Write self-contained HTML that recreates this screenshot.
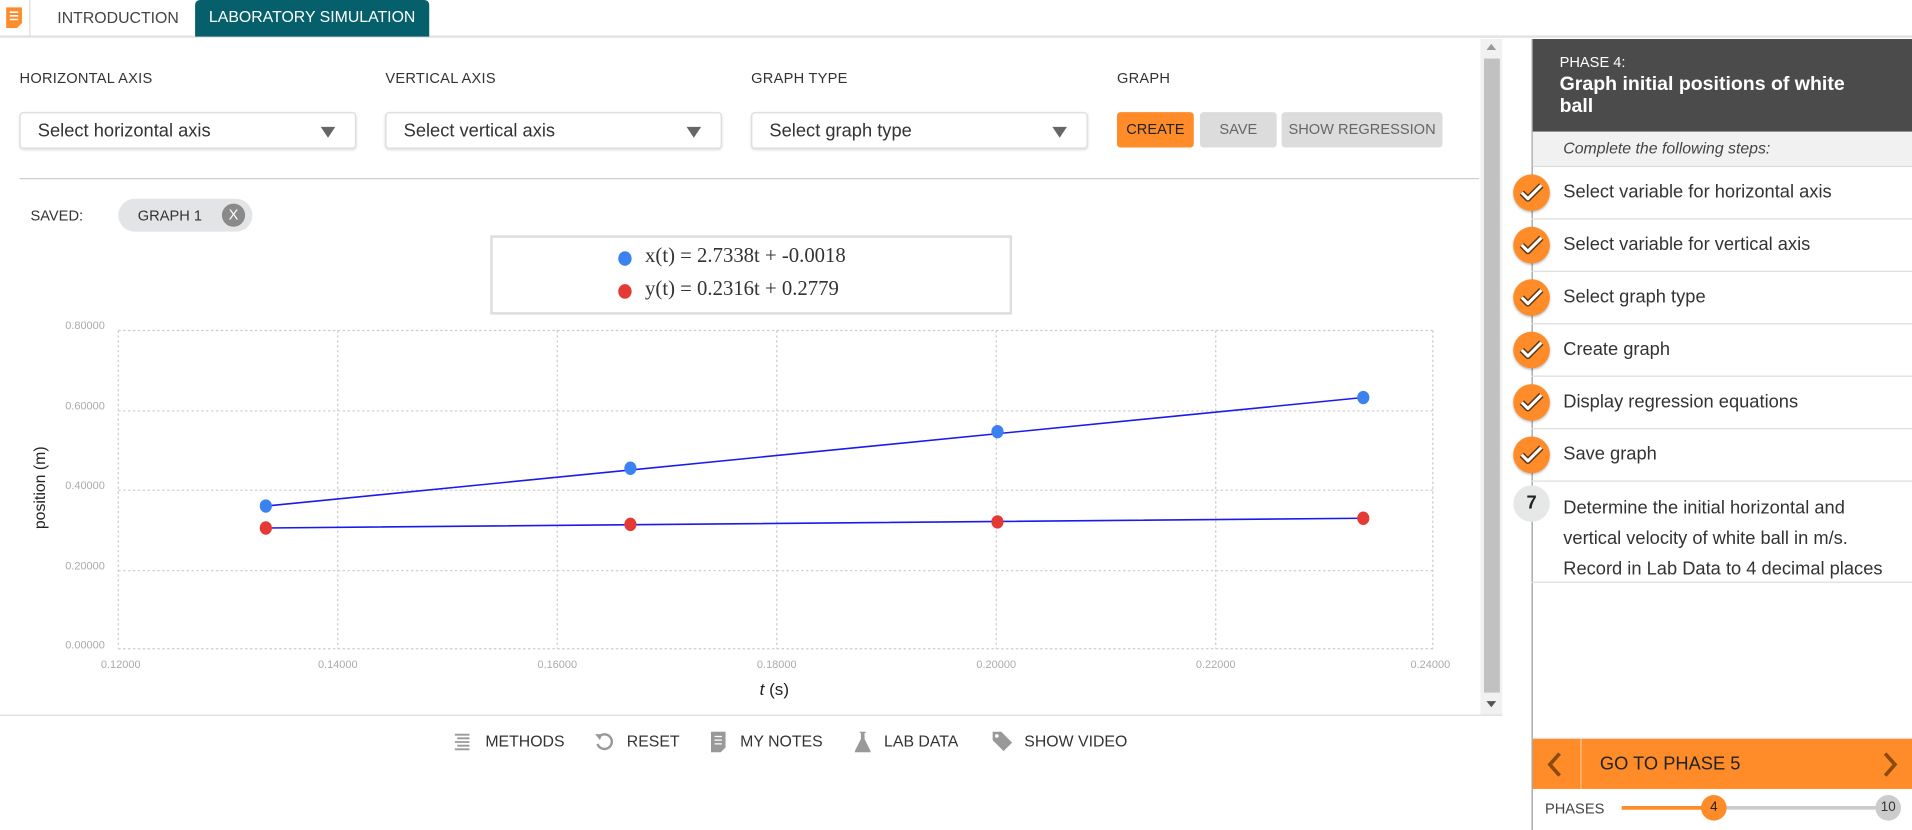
<!DOCTYPE html>
<html><head><meta charset="utf-8"><style>
*{box-sizing:border-box;margin:0;padding:0}
html,body{width:1912px;height:830px;overflow:hidden;background:#fff;font-family:"Liberation Sans",sans-serif;color:#333}
#w{position:absolute;left:0;top:0;width:1568px;height:681px;transform:scale(1.21939);transform-origin:0 0}
.a{position:absolute}
.lbl{font-size:12px;color:#333;letter-spacing:.2px}
.sel{height:30px;border:1px solid #ddd;border-radius:3px;box-shadow:0 1px 2px rgba(0,0,0,.15);font-size:15px;color:#333;padding:6px 14px;background:#fff}
.sel:after{content:"";position:absolute;right:16px;top:11px;border-left:6px solid transparent;border-right:6px solid transparent;border-top:9px solid #666}
.btn{height:29px;border-radius:3px;font-size:12px;text-align:center;line-height:29px;background:#dcdcdc;color:#666}
.step{position:absolute;left:1256px;width:312px;border-bottom:1px solid #ddd;font-size:15px;color:#333}
.chk{position:absolute;left:-15px;width:30px;height:30px;border-radius:50%;background:#ff8c28;box-shadow:0 1px 2px rgba(0,0,0,.3)}
.tb{position:absolute;top:600px;font-size:13px;color:#333}
</style></head><body><div id="w">
<div class="a" style="left:0;top:0;width:1568px;height:31px;border-bottom:2px solid #e3e3e3"></div>
<div class="a" style="left:24px;top:0;width:1px;height:30px;background:#ddd"></div>
<svg class="a" style="left:5px;top:5px" width="14" height="19" viewBox="0 0 14 19"><path d="M0 1h13v13l-4 4H0z" fill="#ff8c28"/><path d="M3 5h7M3 8h7M3 11h7" stroke="#fff" stroke-width="1.3"/></svg>
<div class="a" style="left:47px;top:7px;font-size:13px;color:#444">INTRODUCTION</div>
<div class="a" style="left:160px;top:0;width:192px;height:30px;background:#06606b;border-radius:4px 4px 0 0;color:#fff;font-size:13px;text-align:center;line-height:28px">LABORATORY SIMULATION</div>
<div class="a lbl" style="left:16px;top:57px">HORIZONTAL AXIS</div>
<div class="a lbl" style="left:316px;top:57px">VERTICAL AXIS</div>
<div class="a lbl" style="left:616px;top:57px">GRAPH TYPE</div>
<div class="a lbl" style="left:916px;top:57px">GRAPH</div>
<div class="a sel" style="left:16px;top:92px;width:276px">Select horizontal axis</div>
<div class="a sel" style="left:316px;top:92px;width:276px">Select vertical axis</div>
<div class="a sel" style="left:616px;top:92px;width:276px">Select graph type</div>
<div class="a btn" style="left:916px;top:92px;width:63px;background:#ff8c28;color:#222">CREATE</div>
<div class="a btn" style="left:984px;top:92px;width:63px">SAVE</div>
<div class="a btn" style="left:1051px;top:92px;width:132px">SHOW REGRESSION</div>
<div class="a" style="left:16px;top:146px;width:1197px;height:1px;background:#ccc"></div>
<div class="a" style="left:1214px;top:32px;width:18px;height:555px;background:#f1f1f1"></div>
<div class="a" style="left:1217px;top:48px;width:13px;height:520px;background:#c1c1c1"></div>
<div class="a" style="left:1219px;top:36px;border-left:4px solid transparent;border-right:4px solid transparent;border-bottom:5px solid #999"></div>
<div class="a" style="left:1219px;top:575px;border-left:4px solid transparent;border-right:4px solid transparent;border-top:5px solid #555"></div>
<div class="a" style="left:25px;top:170px;font-size:12px">SAVED:</div>
<div class="a" style="left:97px;top:163px;width:110px;height:27px;border-radius:14px;background:#e2e4e5"></div>
<div class="a" style="left:113px;top:170px;font-size:12px">GRAPH 1</div>
<div class="a" style="left:182px;top:167px;width:19px;height:19px;border-radius:50%;background:#8a8a8a;color:#fff;font-size:12px;text-align:center;line-height:19px">X</div>
<div class="a" style="left:402px;top:193px;width:428px;height:65px;border:2px solid #ddd"></div>
<div class="a" style="left:507px;top:206px;width:11px;height:12px;border-radius:50%;background:#3b82f0"></div>
<div class="a" style="left:507px;top:233px;width:11px;height:12px;border-radius:50%;background:#e53935"></div>
<div class="a" style="left:529px;top:200px;font-family:'Liberation Serif',serif;font-size:17px;color:#333">x(t) = 2.7338t + -0.0018</div>
<div class="a" style="left:529px;top:227px;font-family:'Liberation Serif',serif;font-size:17px;color:#333">y(t) = 0.2316t + 0.2779</div>
<svg class="a" style="left:0;top:250px" width="1210" height="340" viewBox="0 250 1210 340">
<g stroke="#ccc" stroke-dasharray="2,2" stroke-width="1">
<path d="M97 271H1175M97 337H1175M97 402H1175M97 468H1175M97 532H1175"/>
<path d="M97 271V532M277 271V532M457 271V532M637 271V532M817 271V532M997 271V532M1175 271V532"/>
</g>
<g font-size="9" fill="#aaa" font-family="Liberation Sans">
<text x="86" y="270" text-anchor="end">0.80000</text><text x="86" y="336" text-anchor="end">0.60000</text><text x="86" y="401" text-anchor="end">0.40000</text><text x="86" y="467" text-anchor="end">0.20000</text><text x="86" y="532" text-anchor="end">0.00000</text>
<g text-anchor="middle"><text x="99" y="548">0.12000</text><text x="277" y="548">0.14000</text><text x="457" y="548">0.16000</text><text x="637" y="548">0.18000</text><text x="817" y="548">0.20000</text><text x="997" y="548">0.22000</text><text x="1173" y="548">0.24000</text></g>
</g>
<path d="M218 415L1118 326M218 433L1118 425" stroke="#1a1aee" stroke-width="1.3" fill="none"/>
<g fill="#3b82f0"><ellipse cx="218" cy="415" rx="5" ry="5.5"/><ellipse cx="517" cy="384" rx="5" ry="5.5"/><ellipse cx="818" cy="354" rx="5" ry="5.5"/><ellipse cx="1118" cy="326" rx="5" ry="5.5"/></g>
<g fill="#e53935"><ellipse cx="218" cy="433" rx="5" ry="5.5"/><ellipse cx="517" cy="430" rx="5" ry="5.5"/><ellipse cx="818" cy="428" rx="5" ry="5.5"/><ellipse cx="1118" cy="425" rx="5" ry="5.5"/></g>
<text transform="translate(37 400) rotate(-90)" text-anchor="middle" font-size="13" fill="#222" font-family="Liberation Sans">position (m)</text>
<text x="635" y="570" text-anchor="middle" font-size="14" fill="#222" font-family="Liberation Sans"><tspan font-style="italic">t</tspan> (s)</text>
</svg>
<div class="a" style="left:0;top:586px;width:1232px;height:1px;background:#ddd"></div>
<svg class="a" style="left:372px;top:601px" width="14" height="15"><path d="M1 1.5h12M3 4.5h10M1 7.5h12M3 10.5h10M1 13.5h12" stroke="#999" stroke-width="1.5"/></svg>
<div class="tb" style="left:398px">METHODS</div>
<svg class="a" style="left:487px;top:600px" width="18" height="17" viewBox="0 0 18 17"><path d="M5 3.5A6 6 0 1 1 3 10" fill="none" stroke="#999" stroke-width="2"/><path d="M1 2l6 0-2 5z" fill="#999"/></svg>
<div class="tb" style="left:514px">RESET</div>
<svg class="a" style="left:583px;top:600px" width="13" height="17"><path d="M0 0h12v13l-4 4H0z" fill="#999"/><path d="M3 4h6M3 7h6M3 10h6" stroke="#fff"/></svg>
<div class="tb" style="left:607px">MY NOTES</div>
<svg class="a" style="left:701px;top:600px" width="13" height="17"><path d="M4 0h5v1H8v5l5 10v1H0v-1L5 6V1H4z" fill="#999"/></svg>
<div class="tb" style="left:725px">LAB DATA</div>
<svg class="a" style="left:814px;top:600px" width="16" height="16"><path d="M0 0h7l9 9-7 7L0 7z" fill="#999"/><circle cx="3.5" cy="3.5" r="1.5" fill="#fff"/></svg>
<div class="tb" style="left:840px">SHOW VIDEO</div>
<div class="a" style="left:1256px;top:32px;width:1px;height:649px;background:#999"></div>
<div class="a" style="left:1257px;top:32px;width:311px;height:76px;background:#4b4b4b;color:#fff">
<div class="a" style="left:22px;top:12px;font-size:12px">PHASE 4:</div>
<div class="a" style="left:22px;top:29px;font-size:16px;font-weight:bold;line-height:18px;width:260px">Graph initial positions of white ball</div></div>
<div class="a" style="left:1257px;top:108px;width:311px;height:29px;background:#f1f1f1;border-bottom:1px solid #ddd;font-size:13px;font-style:italic;padding:6px 0 0 25px;color:#444">Complete the following steps:</div>
<div class="step" style="top:137px;height:43px"><div class="chk" style="top:6px"></div><div class="a" style="left:26px;top:12px">Select variable for horizontal axis</div></div>
<div class="step" style="top:180px;height:43px"><div class="chk" style="top:6px"></div><div class="a" style="left:26px;top:12px">Select variable for vertical axis</div></div>
<div class="step" style="top:223px;height:43px"><div class="chk" style="top:6px"></div><div class="a" style="left:26px;top:12px">Select graph type</div></div>
<div class="step" style="top:266px;height:43px"><div class="chk" style="top:6px"></div><div class="a" style="left:26px;top:12px">Create graph</div></div>
<div class="step" style="top:309px;height:43px"><div class="chk" style="top:6px"></div><div class="a" style="left:26px;top:12px">Display regression equations</div></div>
<div class="step" style="top:352px;height:43px"><div class="chk" style="top:6px"></div><div class="a" style="left:26px;top:12px">Save graph</div></div>
<div class="step" style="top:395px;height:83px"><div class="a" style="left:-15px;top:3px;width:30px;height:30px;border-radius:50%;background:#e6e8e8;font-weight:bold;font-size:15px;text-align:center;line-height:30px;color:#222">7</div><div class="a" style="left:26px;top:9px;line-height:25px;width:280px">Determine the initial horizontal and vertical velocity of white ball in m/s. Record in Lab Data to 4 decimal places</div></div>
<svg class="a" style="left:1241px;top:137px" width="30" height="260"><g fill="none" stroke="#5a3a1a" stroke-width="5" stroke-linejoin="round"><path d="M7 21l5 5 11-11"/><path d="M7 64l5 5 11-11"/><path d="M7 107l5 5 11-11"/><path d="M7 150l5 5 11-11"/><path d="M7 193l5 5 11-11"/><path d="M7 236l5 5 11-11"/></g><g fill="none" stroke="#fff" stroke-width="2.5" stroke-linejoin="round"><path d="M7 21l5 5 11-11"/><path d="M7 64l5 5 11-11"/><path d="M7 107l5 5 11-11"/><path d="M7 150l5 5 11-11"/><path d="M7 193l5 5 11-11"/><path d="M7 236l5 5 11-11"/></g></svg>
<div class="a" style="left:1257px;top:605px;width:311px;height:1px;background:#ddd"></div>
<div class="a" style="left:1257px;top:606px;width:311px;height:41px;background:#ff8c28"></div>
<div class="a" style="left:1296px;top:606px;width:1px;height:41px;background:#ffc48a"></div>
<svg class="a" style="left:1268px;top:616px" width="14" height="22"><path d="M11 2L3 11l8 9" fill="none" stroke="#8a4a10" stroke-width="3"/></svg>
<svg class="a" style="left:1543px;top:616px" width="14" height="22"><path d="M3 2l8 9-8 9" fill="none" stroke="#8a4a10" stroke-width="3"/></svg>
<div class="a" style="left:1312px;top:618px;font-size:15px;color:#222">GO TO PHASE 5</div>
<div class="a" style="left:1267px;top:656px;font-size:12px;color:#444">PHASES</div>
<div class="a" style="left:1330px;top:661px;width:218px;height:3px;background:#ccc"></div>
<div class="a" style="left:1330px;top:661px;width:75px;height:3px;background:#ff8c28"></div>
<div class="a" style="left:1395px;top:652px;width:21px;height:21px;border-radius:50%;background:#ff8c28;font-size:11px;text-align:center;line-height:21px;color:#222">4</div>
<div class="a" style="left:1538px;top:652px;width:21px;height:21px;border-radius:50%;background:#ccc;font-size:11px;text-align:center;line-height:21px;color:#333">10</div>
</div></body></html>
